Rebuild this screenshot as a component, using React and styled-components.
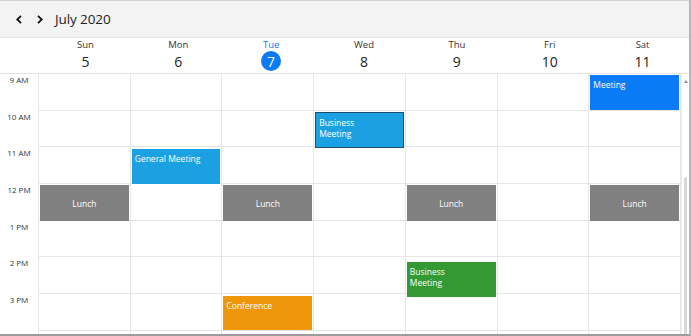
import React from 'react';
import styled, { createGlobalStyle } from 'styled-components';

const Global = createGlobalStyle`
  html, body { margin: 0; padding: 0; background: #fff; }
  body { font-family: "Open Sans", "Noto Sans", sans-serif; }
  * { box-sizing: border-box; }
`;

const ROW = 36.67;

const Frame = styled.div`
  width: 691px;
  height: 336px;
  border-top: 1px solid #d2d2d2;
  border-right: 2px solid #b8b8b8;
  border-bottom: 2px solid #9c9c9c;
  display: flex;
  flex-direction: column;
  overflow: hidden;
  background: #fff;
`;

const Toolbar = styled.div`
  height: 37px;
  flex: none;
  background: #f3f3f3;
  border-bottom: 1px solid #e2e2e2;
  display: flex;
  align-items: center;
  padding-left: 16px;
`;

const NavButton = styled.button`
  border: 0;
  background: none;
  padding: 0;
  margin: 0 ${(p) => p.$gap}px 0 0;
  width: 6px;
  height: 9px;
  display: flex;
  cursor: pointer;
`;

const Title = styled.div`
  font-size: 13.5px;
  color: #222;
  letter-spacing: -0.1px;
`;

const HeaderRow = styled.div`
  height: 36px;
  flex: none;
  display: grid;
  grid-template-columns: 39px repeat(7, 1fr);
  border-bottom: 1px solid #e2e2e2;
`;

const DayHead = styled.div`
  display: flex;
  flex-direction: column;
  align-items: center;
  padding-top: 1px;
`;

const DayName = styled.div`
  font-size: 9.5px;
  line-height: 12px;
  color: ${(p) => (p.$today ? '#0a7af5' : '#333')};
`;

const DayNum = styled.div`
  width: 20px;
  height: 20px;
  border-radius: 50%;
  display: flex;
  align-items: center;
  justify-content: center;
  font-size: 14px;
  color: ${(p) => (p.$today ? '#fff' : '#222')};
  background: ${(p) => (p.$today ? '#0a7af5' : 'transparent')};
`;

const Body = styled.div`
  flex: 1;
  display: grid;
  grid-template-columns: 39px repeat(7, 1fr) 8px;
  overflow: hidden;
`;

const TimeCol = styled.div`
  border-right: 1px solid #e6e6e6;
`;

const TimeLabel = styled.div`
  height: ${ROW}px;
  font-size: 8px;
  line-height: 10px;
  color: #333;
  text-align: center;
  padding-top: 1px;
`;

const DayCol = styled.div`
  position: relative;
  border-right: 1px solid #e6e6e6;
`;

const Slot = styled.div`
  height: ${ROW}px;
  border-bottom: 1px solid #e6e6e6;
`;

const Event = styled.div`
  position: absolute;
  left: 1px;
  right: 1px;
  background: ${(p) => p.$color};
  border: ${(p) => (p.$selected ? '1px solid #1b4f75' : '0')};
  color: #fff;
  font-size: 8.5px;
  line-height: 11px;
  padding: ${(p) => (p.$center ? '0' : '4px 3px')};
  display: ${(p) => (p.$center ? 'flex' : 'block')};
  align-items: center;
  justify-content: center;
  overflow: hidden;
`;

const Scrollbar = styled.div`
  position: relative;
  border-left: 1px solid #ececec;
  background: #fff;
  display: flex;
  flex-direction: column;
  align-items: center;
`;

const Arrow = styled.div`
  width: 0;
  height: 0;
  border-left: 2.5px solid transparent;
  border-right: 2.5px solid transparent;
  ${(p) =>
    p.$up
      ? 'border-bottom: 3px solid #8a8a8a; margin-top: 6px;'
      : 'border-top: 3px solid #8a8a8a;'}
`;

const Track = styled.div`
  flex: 1;
  width: 100%;
  display: flex;
  flex-direction: column;
  align-items: center;
  padding: 94px 0 8px;
`;

const Thumb = styled.div`
  width: 3px;
  flex: 1;
  border-radius: 2px;
  background: #d8d8d8;
`;

const BottomArrow = styled.div`
  height: 6px;
  margin-bottom: 3px;
  display: flex;
  align-items: center;
`;

const days = [
  { name: 'Sun', num: 5 },
  { name: 'Mon', num: 6 },
  { name: 'Tue', num: 7, today: true },
  { name: 'Wed', num: 8 },
  { name: 'Thu', num: 9 },
  { name: 'Fri', num: 10 },
  { name: 'Sat', num: 11 },
];

const hours = ['9 AM', '10 AM', '11 AM', '12 PM', '1 PM', '2 PM', '3 PM', '4 PM'];

const events = [
  { day: 6, top: 1, height: 35, color: '#0a7af5', title: 'Meeting' },
  { day: 3, top: 38, height: 36, color: '#1ba1e2', title: 'Business Meeting', selected: true, wrap: true },
  { day: 1, top: 75, height: 35, color: '#1ba1e2', title: 'General Meeting' },
  { day: 0, top: 111, height: 36, color: '#808080', title: 'Lunch', center: true },
  { day: 2, top: 111, height: 36, color: '#808080', title: 'Lunch', center: true },
  { day: 4, top: 111, height: 36, color: '#808080', title: 'Lunch', center: true },
  { day: 6, top: 111, height: 36, color: '#808080', title: 'Lunch', center: true },
  { day: 4, top: 188, height: 35, color: '#339933', title: 'Business Meeting', wrap: true },
  { day: 2, top: 222, height: 34, color: '#f0960a', title: 'Conference' },
];

const Chevron = ({ dir }) => (
  <svg width="6" height="9" viewBox="0 0 6 9">
    <polyline
      points={dir === 'left' ? '5,0.8 1.2,4.5 5,8.2' : '1,0.8 4.8,4.5 1,8.2'}
      fill="none"
      stroke="#111"
      strokeWidth="1.8"
    />
  </svg>
);

export default function App() {
  return (
    <>
      <Global />
      <Frame>
        <Toolbar>
          <NavButton $gap={15} aria-label="Previous">
            <Chevron dir="left" />
          </NavButton>
          <NavButton $gap={12} aria-label="Next">
            <Chevron dir="right" />
          </NavButton>
          <Title>July 2020</Title>
        </Toolbar>
        <HeaderRow>
          <div />
          {days.map((d) => (
            <DayHead key={d.name}>
              <DayName $today={d.today}>{d.name}</DayName>
              <DayNum $today={d.today}>{d.num}</DayNum>
            </DayHead>
          ))}
        </HeaderRow>
        <Body>
          <TimeCol>
            {hours.map((h) => (
              <TimeLabel key={h}>{h}</TimeLabel>
            ))}
          </TimeCol>
          {days.map((d, i) => (
            <DayCol key={d.name}>
              {hours.map((h) => (
                <Slot key={h} />
              ))}
              {events
                .filter((e) => e.day === i)
                .map((e, k) => (
                  <Event
                    key={k}
                    $color={e.color}
                    $selected={e.selected}
                    $center={e.center}
                    style={{ top: e.top, height: e.height }}
                  >
                    {e.wrap ? (
                      <>
                        Business
                        <br />
                        Meeting
                      </>
                    ) : (
                      e.title
                    )}
                  </Event>
                ))}
            </DayCol>
          ))}
          <Scrollbar>
            <Arrow $up />
            <Track>
              <Thumb />
            </Track>
            <BottomArrow>
              <Arrow />
            </BottomArrow>
          </Scrollbar>
        </Body>
      </Frame>
    </>
  );
}
